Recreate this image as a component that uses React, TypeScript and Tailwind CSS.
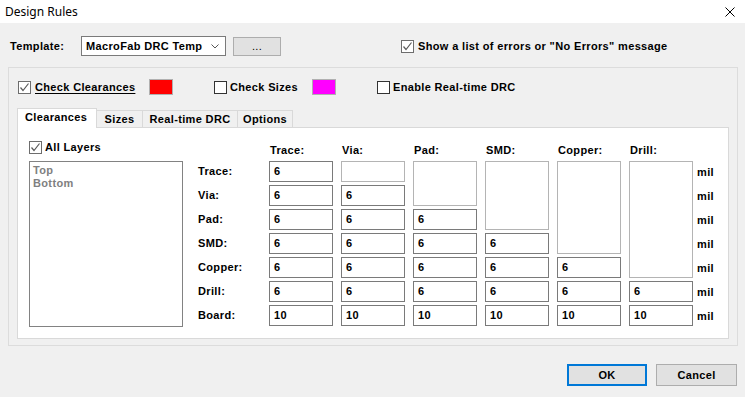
import React from 'react';

function CheckBox({ checked }: { checked?: boolean }) {
    return (
        <span
            className={
                'w-[13px] h-[13px] shrink-0 bg-white border flex items-center justify-center ' +
                (checked ? 'border-[#6d6d6d]' : 'border-[#333333]')
            }
        >
            {checked && (
                <svg width="11" height="11" viewBox="0 0 11 11">
                    <path d="M1.5 5.5 L4 8.5 L9.5 1.5" fill="none" stroke="#5a5a5a" strokeWidth="1.2" />
                </svg>
            )}
        </span>
    );
}

const cols = ['Trace:', 'Via:', 'Pad:', 'SMD:', 'Copper:', 'Drill:'];
const rows = ['Trace:', 'Via:', 'Pad:', 'SMD:', 'Copper:', 'Drill:', 'Board:'];

const colStart = ['col-start-2', 'col-start-3', 'col-start-4', 'col-start-5', 'col-start-6', 'col-start-7'];
const rowStart = ['row-start-2', 'row-start-3', 'row-start-4', 'row-start-5', 'row-start-6', 'row-start-7', 'row-start-8'];
const rowSpan = ['row-span-1', 'row-span-1', 'row-span-2', 'row-span-3', 'row-span-4', 'row-span-5'];

function ClearanceGrid() {
    const cells: React.ReactNode[] = [];

    cols.forEach((c, j) => {
        cells.push(
            <div key={'h' + j} className={'row-start-1 h-[16px] flex items-center pl-px ' + colStart[j]}>
                {c}
            </div>
        );
        if (j > 0) {
            cells.push(
                <div key={'p' + j} className={'row-start-2 bg-white border border-[#b4b4b4] ' + colStart[j] + ' ' + rowSpan[j]} />
            );
        }
        rows.forEach((r, i) => {
            if (i < j) return;
            cells.push(
                <div
                    key={'c' + j + '-' + i}
                    className={'h-[21px] bg-white border border-[#7a7a7a] flex items-center pl-[4px] ' + colStart[j] + ' ' + rowStart[i]}
                >
                    {i === 6 ? '10' : '6'}
                </div>
            );
        });
    });

    rows.forEach((r, i) => {
        cells.push(
            <div key={'r' + i} className={'col-start-1 h-[21px] flex items-center ' + rowStart[i]}>
                {r}
            </div>
        );
        cells.push(
            <div key={'m' + i} className={'col-start-8 -ml-[4px] h-[21px] flex items-center pt-[2px] ' + rowStart[i]}>
                mil
            </div>
        );
    });

    return (
        <div className="grid grid-cols-[63px_repeat(6,64px)_auto] grid-rows-[16px_repeat(7,21px)] gap-x-[8px] gap-y-[3px] mt-px">
            {cells}
        </div>
    );
}

export default function App() {
    return (
        <div className="w-[745px] h-[397px] bg-[#f0f0f0] text-black text-[11px] tracking-[0.35px] font-bold font-['Liberation_Sans',Arial,sans-serif] flex flex-col overflow-hidden">
            <div className="h-[23px] shrink-0 bg-white flex items-center justify-between pl-[5px] pr-[10px]">
                <span className="font-['Noto_Sans',sans-serif] font-normal tracking-normal text-[12px]">Design Rules</span>
                <svg width="10" height="10" viewBox="0 0 10 10">
                    <path d="M0.5 0.5 L9.5 9.5 M9.5 0.5 L0.5 9.5" stroke="#000" strokeWidth="1" />
                </svg>
            </div>

            <div className="flex items-center h-[20px] mt-[13px] pl-[10px]">
                <span className="w-[71px]">Template:</span>
                <div className="w-[145px] h-[20px] bg-white border border-[#7a7a7a] flex items-center justify-between pl-[4px] pr-[6px]">
                    <span>MacroFab DRC Temp</span>
                    <svg width="8" height="5" viewBox="0 0 8 5">
                        <path d="M0.5 0.5 L4 4 L7.5 0.5" fill="none" stroke="#555" strokeWidth="1" />
                    </svg>
                </div>
                <div className="ml-[7px] w-[48px] h-[19px] bg-[#e1e1e1] border border-[#adadad] flex items-center justify-center font-normal">
                    ...
                </div>
                <div className="ml-[120px] flex items-center gap-[4px]">
                    <CheckBox checked />
                    <span>Show a list of errors or "No Errors" message</span>
                </div>
            </div>

            <div className="mt-[11px] ml-[8px] w-[730px] border border-[#dcdcdc] pt-[11px] pl-[8px] pr-[8px] pb-[6px]">
                <div className="flex items-center h-[16px] pl-px">
                    <div className="w-[196px] flex items-center">
                        <CheckBox checked />
                        <span className="ml-[4px] w-[114px] underline underline-offset-2">Check Clearances</span>
                        <span className="w-[24px] h-[16px] bg-[#ff0000] border border-[#b0b0b0]" />
                    </div>
                    <div className="w-[163px] flex items-center">
                        <CheckBox />
                        <span className="ml-[3px] w-[82px]">Check Sizes</span>
                        <span className="w-[24px] h-[16px] bg-[#ff00ff] border border-[#b0b0b0]" />
                    </div>
                    <div className="flex items-center">
                        <CheckBox />
                        <span className="ml-[3px]">Enable Real-time DRC</span>
                    </div>
                </div>

                <div className="mt-[13px] h-[19px] flex items-end">
                    <div className="relative z-10 -mb-px h-[20px] w-[80px] bg-white border border-b-0 border-[#d9d9d9] flex items-center pl-[7px] pb-[2px]">
                        Clearances
                    </div>
                    <div className="h-[17px] w-[46px] border border-b-0 border-l-0 border-[#d9d9d9] flex items-center justify-center">
                        Sizes
                    </div>
                    <div className="h-[17px] w-[95px] border border-b-0 border-l-0 border-[#d9d9d9] flex items-center justify-center">
                        Real-time DRC
                    </div>
                    <div className="h-[17px] w-[55px] border border-b-0 border-l-0 border-[#d9d9d9] flex items-center justify-center">
                        Options
                    </div>
                </div>

                <div className="h-[212px] bg-white border border-[#d9d9d9] pt-[13px] pl-[11px] flex gap-[15px]">
                    <div className="w-[154px] flex flex-col">
                        <div className="h-[13px] flex items-center gap-[3px]">
                            <CheckBox checked />
                            <span>All Layers</span>
                        </div>
                        <div className="mt-[7px] h-[166px] border border-[#828282] px-[3px] pt-[2px] text-[#808080] leading-[13px]">
                            <div>Top</div>
                            <div>Bottom</div>
                        </div>
                    </div>
                    <ClearanceGrid />
                </div>
            </div>

            <div className="mt-[18px] flex justify-end gap-[9px] pr-[8px]">
                <div className="w-[80px] h-[22px] bg-[#e1e1e1] border-2 border-[#0078d7] flex items-center justify-center">
                    OK
                </div>
                <div className="w-[81px] h-[22px] bg-[#e1e1e1] border border-[#adadad] flex items-center justify-center">
                    Cancel
                </div>
            </div>
        </div>
    );
}
